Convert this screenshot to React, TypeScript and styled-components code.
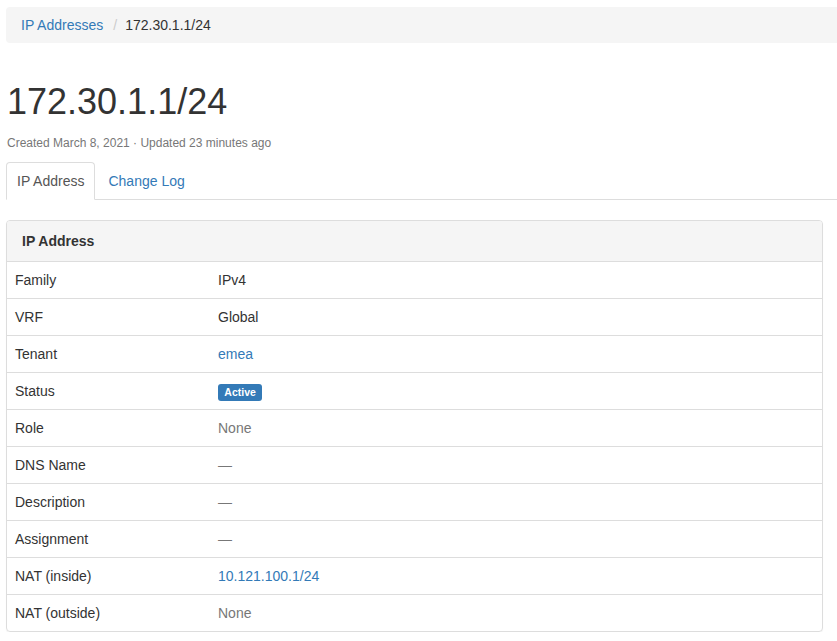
import { FC } from 'react'
import styled, { createGlobalStyle } from 'styled-components'

const GlobalStyle = createGlobalStyle`
  html, body {
    margin: 0;
    padding: 0;
    background: #fff;
  }
  body {
    font-family: "Liberation Sans", Arial, Helvetica, sans-serif;
    font-size: 14px;
    line-height: 20px;
    color: #333;
    overflow: hidden;
  }
  * {
    box-sizing: border-box;
  }
`

type Value =
  | { kind: 'text'; text: string }
  | { kind: 'link'; text: string }
  | { kind: 'muted'; text: string }
  | { kind: 'badge'; text: string }

interface Row {
  label: string
  value: Value
}

const rows: Row[] = [
  { label: 'Family', value: { kind: 'text', text: 'IPv4' } },
  { label: 'VRF', value: { kind: 'text', text: 'Global' } },
  { label: 'Tenant', value: { kind: 'link', text: 'emea' } },
  { label: 'Status', value: { kind: 'badge', text: 'Active' } },
  { label: 'Role', value: { kind: 'muted', text: 'None' } },
  { label: 'DNS Name', value: { kind: 'muted', text: '\u2014' } },
  { label: 'Description', value: { kind: 'muted', text: '\u2014' } },
  { label: 'Assignment', value: { kind: 'muted', text: '\u2014' } },
  { label: 'NAT (inside)', value: { kind: 'link', text: '10.121.100.1/24' } },
  { label: 'NAT (outside)', value: { kind: 'muted', text: 'None' } },
]

const renderValue = (value: Value) => {
  switch (value.kind) {
    case 'link':
      return <Link href="#">{value.text}</Link>
    case 'muted':
      return <Muted>{value.text}</Muted>
    case 'badge':
      return <Badge>{value.text}</Badge>
    default:
      return value.text
  }
}

const App: FC = () => {
  return (
    <>
      <GlobalStyle />
      <Page>
        <Breadcrumb>
          <Crumb>
            <Link href="#">IP Addresses</Link>
          </Crumb>
          <Separator>/</Separator>
          <Crumb $active>172.30.1.1/24</Crumb>
        </Breadcrumb>

        <Title>172.30.1.1/24</Title>
        <Meta>Created March 8, 2021 · Updated 23 minutes ago</Meta>

        <Tabs>
          <Tab $active>IP Address</Tab>
          <Tab>Change Log</Tab>
        </Tabs>

        <Panel>
          <PanelHeading>IP Address</PanelHeading>
          <Table>
            <tbody>
              {rows.map((row) => (
                <tr key={row.label}>
                  <LabelCell>{row.label}</LabelCell>
                  <ValueCell>{renderValue(row.value)}</ValueCell>
                </tr>
              ))}
            </tbody>
          </Table>
        </Panel>
      </Page>
    </>
  )
}

const Page = styled.div`
  padding: 7px 0 0 6px;
  width: 837px;
`

const Link = styled.a`
  color: #337ab7;
  text-decoration: none;
`

const Breadcrumb = styled.div`
  display: flex;
  align-items: center;
  height: 36px;
  padding: 8px 15px;
  background: #f5f5f5;
  border-radius: 4px 0 0 4px;
`

const Crumb = styled.span<{ $active?: boolean }>`
  color: ${({ $active }) => ($active ? '#333' : 'inherit')};
`

const Separator = styled.span`
  color: #ccc;
  padding: 0 8px 0 10px;
`

const Title = styled.h1`
  margin: 39px 0 0 1px;
  font-size: 36px;
  font-weight: 500;
  line-height: 39.6px;
  color: #333;
`

const Meta = styled.p`
  margin: 13px 0 0 1px;
  font-size: 12px;
  line-height: 17px;
  color: #777;
`

const Tabs = styled.div`
  display: flex;
  margin-top: 10px;
  border-bottom: 1px solid #ddd;
`

const Tab = styled.div<{ $active?: boolean }>`
  margin-right: 2px;
  margin-bottom: -1px;
  padding: 8px 10px;
  line-height: 20px;
  border: 1px solid ${({ $active }) => ($active ? '#ddd' : 'transparent')};
  border-bottom-color: ${({ $active }) => ($active ? '#fff' : 'transparent')};
  border-radius: 4px 4px 0 0;
  background: ${({ $active }) => ($active ? '#fff' : 'transparent')};
  color: ${({ $active }) => ($active ? '#555' : '#337ab7')};
`

const Panel = styled.div`
  margin-top: 20px;
  width: 817px;
  border: 1px solid #ddd;
  border-radius: 4px;
  box-shadow: 0 1px 1px rgba(0, 0, 0, 0.05);
  overflow: hidden;
`

const PanelHeading = styled.div`
  padding: 10px 15px;
  background: #f5f5f5;
  border-bottom: 1px solid #ddd;
  font-weight: 700;
  color: #333;
`

const Table = styled.table`
  width: 100%;
  border-collapse: collapse;

  tr + tr td {
    border-top: 1px solid #ddd;
  }
`

const LabelCell = styled.td`
  width: 203px;
  padding: 8px;
  line-height: 20px;
  vertical-align: top;
`

const ValueCell = styled.td`
  padding: 8px;
  line-height: 20px;
  vertical-align: top;
`

const Muted = styled.span`
  color: #777;
`

const Badge = styled.span`
  display: inline-block;
  padding: 3px 6.3px 3.5px;
  font-size: 10.5px;
  font-weight: 700;
  line-height: 10.5px;
  color: #fff;
  background: #337ab7;
  border-radius: 3px;
  vertical-align: 0;
`

export default App
